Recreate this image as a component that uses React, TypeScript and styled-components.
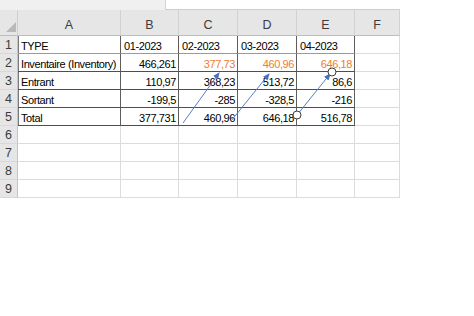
import styled, { createGlobalStyle, css } from "styled-components";

const GlobalStyle = createGlobalStyle`
  html, body {
    margin: 0;
    padding: 0;
    background: #ffffff;
  }
  body {
    font-family: "Liberation Sans", Arial, sans-serif;
  }
  * {
    box-sizing: border-box;
  }
`;

const Screen = styled.div`
  position: relative;
  width: 474px;
  height: 316px;
  overflow: hidden;
  background: #ffffff;
`;

const TopStrip = styled.div`
  display: flex;
  width: 400px;
  height: 10px;
`;

const StripFill = styled.div`
  width: 165px;
  background: #f0f0f0;
`;

const FormulaBox = styled.div`
  flex: 1;
  background: #ffffff;
  border-left: 1px solid #d4d4d4;
  border-bottom: 1px solid #cdcdcd;
`;

const Sheet = styled.div`
  display: grid;
  grid-template-columns: 18px 103px 58px 59px 59px 58px 45px;
  grid-template-rows: 26px repeat(9, 18px);
  width: 400px;
`;

const headerBase = css`
  background: #e6e6e6;
  color: #3c3c3c;
  font-size: 12.5px;
  display: flex;
  justify-content: center;
`;

const Corner = styled.div`
  ${headerBase};
  position: relative;
  border-right: 1px solid #cfcfcf;
  border-bottom: 1px solid #bdbdbd;

  &::after {
    content: "";
    position: absolute;
    right: 1px;
    bottom: 3px;
    border-left: 10px solid transparent;
    border-bottom: 10px solid #b9b9b9;
  }
`;

const ColHead = styled.div`
  ${headerBase};
  align-items: flex-end;
  padding-bottom: 3px;
  border-right: 1px solid #d2d2d2;
  border-bottom: 1px solid #bdbdbd;
`;

const RowHead = styled.div`
  ${headerBase};
  align-items: flex-end;
  padding-bottom: 1px;
  border-right: 1px solid #c4c4c4;
  border-bottom: 1px solid #d8d8d8;
`;

const Cell = styled.div<{
  $boxed?: boolean;
  $num?: boolean;
  $orange?: boolean;
  $firstCol?: boolean;
  $lightBottom?: boolean;
}>`
  display: flex;
  align-items: flex-end;
  justify-content: ${(p) => (p.$num ? "flex-end" : "flex-start")};
  padding: 0 2px 1px 3px;
  font-size: 11px;
  line-height: 12px;
  letter-spacing: -0.4px;
  white-space: nowrap;
  color: ${(p) => (p.$orange ? "#ed7d31" : "#000000")};
  border-right: 1px solid ${(p) => (p.$boxed ? "#5e5e5e" : "#dcdcdc")};
  border-bottom: 1px solid
    ${(p) => (p.$boxed ? (p.$lightBottom ? "#9a9a9a" : "#4e4e4e") : "#dcdcdc")};
  ${(p) =>
    p.$boxed &&
    p.$firstCol &&
    css`
      box-shadow: inset 1px 0 0 #7a7a7a;
    `}
`;

const Overlay = styled.svg`
  position: absolute;
  top: 0;
  left: 0;
  pointer-events: none;
`;

const COLS = ["A", "B", "C", "D", "E", "F"];

const DATA = [
  ["TYPE", "01-2023", "02-2023", "03-2023", "04-2023"],
  ["Inventaire (Inventory)", "466,261", "377,73", "460,96", "646,18"],
  ["Entrant", "110,97", "368,23", "513,72", "86,6"],
  ["Sortant", "-199,5", "-285", "-328,5", "-216"],
  ["Total", "377,731", "460,96", "646,18", "516,78"],
];

// connector lines drawn over the sheet
const LINES = [
  { x1: 183, y1: 123, x2: 219, y2: 73 },
  { x1: 231, y1: 121, x2: 269, y2: 74 },
  { x1: 297, y1: 115, x2: 330, y2: 74 },
];

export default function App() {
  return (
    <Screen>
      <GlobalStyle />
      <TopStrip>
        <StripFill />
        <FormulaBox />
      </TopStrip>

      <Sheet>
        <Corner />
        {COLS.map((c) => (
          <ColHead key={c}>{c}</ColHead>
        ))}

        {Array.from({ length: 9 }, (_, r) => {
          const row = DATA[r];
          return [
            <RowHead key={`h${r}`}>{r + 1}</RowHead>,
            ...COLS.map((c, ci) => {
              const value = row && ci < 5 ? row[ci] : "";
              const boxed = !!row && ci < 5;
              return (
                <Cell
                  key={`${c}${r}`}
                  $boxed={boxed}
                  $firstCol={ci === 0}
                  $num={r > 0 && ci > 0}
                  $orange={r === 1 && ci > 1}
                  $lightBottom={r === 0}
                >
                  {value}
                </Cell>
              );
            }),
          ];
        })}
      </Sheet>

      <Overlay width={474} height={316} viewBox="0 0 474 316">
        <defs>
          <marker
            id="tip"
            markerWidth="7"
            markerHeight="6"
            refX="6"
            refY="3"
            orient="auto"
            markerUnits="userSpaceOnUse"
          >
            <path d="M0,0 L7,3 L0,6 z" fill="#4a6fc2" />
          </marker>
        </defs>
        {LINES.map((l, i) => (
          <line
            key={i}
            {...l}
            stroke="#5a7cc4"
            strokeWidth={1}
            markerEnd="url(#tip)"
          />
        ))}
        <circle cx={297} cy={115} r={4} fill="#ffffff" stroke="#404040" />
        <circle cx={332} cy={72} r={4} fill="#ffffff" stroke="#404040" />
      </Overlay>
    </Screen>
  );
}
